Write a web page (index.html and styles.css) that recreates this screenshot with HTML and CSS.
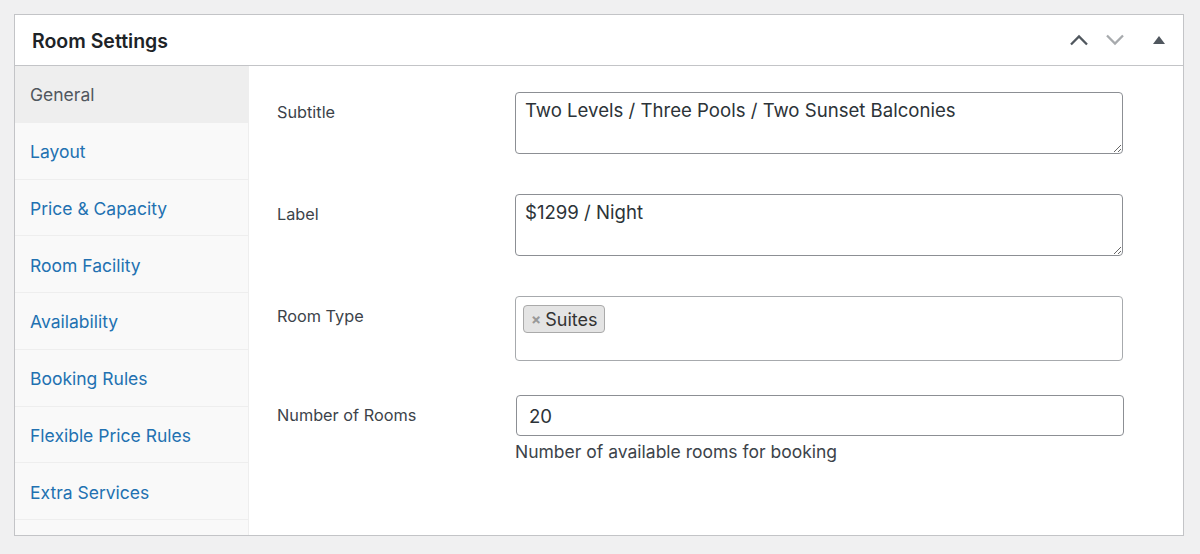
FILE: index.html
```html
<!DOCTYPE html>
<html lang="en">
<head>
    <meta charset="UTF-8">
    <meta name="viewport" content="width=device-width, initial-scale=1.0">
    <title>Room Settings</title>
    <link rel="stylesheet" href="styles.css">
</head>
<body>
    <div class="postbox">
        <div class="postbox-header">
            <h2>Room Settings</h2>
            <div class="handle-actions">
                <button class="handle up" aria-label="Move up">
                    <svg width="20" height="12" viewBox="0 0 20 12"><path d="M2 10.5 L10 2.5 L18 10.5" fill="none" stroke="currentColor" stroke-width="2.3"/></svg>
                </button>
                <button class="handle down" aria-label="Move down">
                    <svg width="20" height="12" viewBox="0 0 20 12"><path d="M2 1.5 L10 9.5 L18 1.5" fill="none" stroke="currentColor" stroke-width="2.3"/></svg>
                </button>
                <button class="handle toggle" aria-label="Toggle panel">
                    <svg width="14" height="10" viewBox="0 0 14 10"><path d="M7 1 L13 9 L1 9 Z" fill="currentColor"/></svg>
                </button>
            </div>
        </div>
        <div class="postbox-inside">
            <ul class="tabs">
                <li class="active">General</li>
                <li><a href="#">Layout</a></li>
                <li><a href="#">Price &amp; Capacity</a></li>
                <li><a href="#">Room Facility</a></li>
                <li><a href="#">Availability</a></li>
                <li><a href="#">Booking Rules</a></li>
                <li><a href="#">Flexible Price Rules</a></li>
                <li><a href="#">Extra Services</a></li>
                <li class="spacer"></li>
            </ul>
            <div class="panel">
                <div class="field">
                    <label for="subtitle">Subtitle</label>
                    <textarea id="subtitle">Two Levels / Three Pools / Two Sunset Balconies</textarea>
                </div>
                <div class="field">
                    <label for="label">Label</label>
                    <textarea id="label">$1299 / Night</textarea>
                </div>
                <div class="field">
                    <label>Room Type</label>
                    <div class="select-box">
                        <span class="chip"><span class="chip-x">×</span>Suites</span>
                    </div>
                </div>
                <div class="field number">
                    <label for="rooms">Number of Rooms</label>
                    <div>
                        <input type="text" id="rooms" value="20">
                        <p class="description">Number of available rooms for booking</p>
                    </div>
                </div>
            </div>
        </div>
    </div>
</body>
</html>
```

FILE: styles.css
```css
body {
    margin: 0;
    padding: 14px;
    background-color: #f0f0f1;
    font-family: Inter, Roboto, "Liberation Sans", Arial, sans-serif;
    color: #3c434a;
}
.postbox {
    width: 1168px;
    background: white;
    border: 1px solid #c3c4c7;
}
.postbox-header {
    display: flex;
    align-items: center;
    justify-content: space-between;
    height: 50px;
    border-bottom: 1px solid #c3c4c7;
}
.postbox-header h2 {
    margin: 2px 0 0 17px;
    font-size: 19.5px;
    font-weight: 600;
    color: #1d2327;
}
.handle-actions {
    display: flex;
    align-items: center;
    margin-right: 6px;
}
.handle {
    background: none;
    border: none;
    padding: 0;
    width: 36px;
    height: 36px;
    display: flex;
    align-items: center;
    justify-content: center;
    cursor: pointer;
}
.handle.up {
    color: #50575e;
}
.handle.down {
    color: #a7aaad;
}
.handle.toggle {
    color: #50575e;
    margin-left: 8px;
}
.postbox-inside {
    display: flex;
    height: 469px;
}
.tabs {
    list-style: none;
    margin: 0;
    padding: 0;
    width: 233px;
    background: #f9f9f9;
    border-right: 1px solid #eeeeee;
    display: flex;
    flex-direction: column;
}
.tabs li {
    height: 53.75px;
    padding-top: 2px;
    border-bottom: 1px solid #eeeeee;
    display: flex;
    align-items: center;
    padding-left: 15px;
    font-size: 17.5px;
}
.tabs li.active {
    background: #eeeeee;
    color: #50575e;
}
.tabs li.spacer {
    flex: 1;
    border-bottom: none;
}
.tabs a {
    color: #2271b1;
    text-decoration: none;
}
.panel {
    flex: 1;
    padding: 26px 0 0 28px;
}
.field {
    display: flex;
    margin-bottom: 40px;
}
.field label {
    width: 238px;
    flex-shrink: 0;
    padding-top: 10px;
    font-size: 16.3px;
    line-height: 20px;
    color: #3c434a;
}
textarea,
.select-box,
input[type="text"] {
    box-sizing: border-box;
    width: 608px;
    border: 1px solid #8c8f94;
    border-radius: 4px;
    font-family: inherit;
    font-size: 18.6px;
    color: #2c3338;
    background: white;
}
textarea {
    height: 62px;
    padding: 5px 9px;
    line-height: 24px;
    resize: vertical;
}
.select-box {
    height: 65px;
    padding: 8px 7px;
    border-color: #a7aaad;
}
.chip {
    display: inline-flex;
    align-items: center;
    height: 26px;
    padding: 0 7px 0 7px;
    background: #e4e4e4;
    border: 1px solid #aaaaaa;
    border-radius: 4px;
    font-size: 18px;
    color: #333333;
}
.chip-x {
    color: #999999;
    font-weight: 700;
    font-size: 15px;
    margin-right: 4px;
}
.field.number {
    margin-top: -6px;
}
input[type="text"] {
    height: 41px;
    padding: 0 12px;
    margin-left: 1px;
}
.description {
    margin: 5px 0 0;
    font-size: 17.5px;
    color: #3c434a;
}
```
